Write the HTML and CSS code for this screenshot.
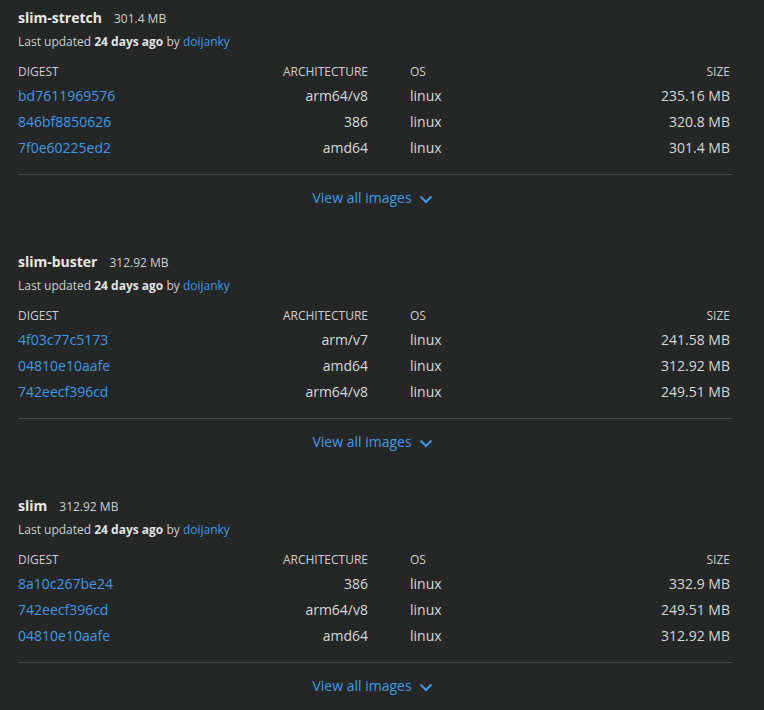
FILE: index.html
```html
<!DOCTYPE html>
<html>
<head>
<meta charset="utf-8">
<link rel="stylesheet" href="styles.css">
</head>
<body>
<div class="page">
  <section class="tag">
    <div class="tag-title"><span class="tag-name">slim-stretch</span><span class="tag-size">301.4 MB</span></div>
    <div class="tag-meta">Last updated <b>24 days ago</b> by <a class="link">doijanky</a></div>
    <div class="table">
      <div class="th">DIGEST</div><div class="th r">ARCHITECTURE</div><div class="th os">OS</div><div class="th r">SIZE</div>
      <a class="td link">bd7611969576</a><div class="td r">arm64/v8</div><div class="td os">linux</div><div class="td r">235.16 MB</div>
      <a class="td link">846bf8850626</a><div class="td r">386</div><div class="td os">linux</div><div class="td r">320.8 MB</div>
      <a class="td link">7f0e60225ed2</a><div class="td r">amd64</div><div class="td os">linux</div><div class="td r">301.4 MB</div>
    </div>
    <div class="divider"></div>
    <div class="more"><a class="more-link">View all images <svg class="chev" width="14" height="9" viewBox="0 0 14 9"><path d="M1.5 1.5 L7 7 L12.5 1.5" fill="none" stroke="currentColor" stroke-width="2"/></svg></a></div>
  </section>
  <section class="tag">
    <div class="tag-title"><span class="tag-name">slim-buster</span><span class="tag-size">312.92 MB</span></div>
    <div class="tag-meta">Last updated <b>24 days ago</b> by <a class="link">doijanky</a></div>
    <div class="table">
      <div class="th">DIGEST</div><div class="th r">ARCHITECTURE</div><div class="th os">OS</div><div class="th r">SIZE</div>
      <a class="td link">4f03c77c5173</a><div class="td r">arm/v7</div><div class="td os">linux</div><div class="td r">241.58 MB</div>
      <a class="td link">04810e10aafe</a><div class="td r">amd64</div><div class="td os">linux</div><div class="td r">312.92 MB</div>
      <a class="td link">742eecf396cd</a><div class="td r">arm64/v8</div><div class="td os">linux</div><div class="td r">249.51 MB</div>
    </div>
    <div class="divider"></div>
    <div class="more"><a class="more-link">View all images <svg class="chev" width="14" height="9" viewBox="0 0 14 9"><path d="M1.5 1.5 L7 7 L12.5 1.5" fill="none" stroke="currentColor" stroke-width="2"/></svg></a></div>
  </section>
  <section class="tag">
    <div class="tag-title"><span class="tag-name">slim</span><span class="tag-size">312.92 MB</span></div>
    <div class="tag-meta">Last updated <b>24 days ago</b> by <a class="link">doijanky</a></div>
    <div class="table">
      <div class="th">DIGEST</div><div class="th r">ARCHITECTURE</div><div class="th os">OS</div><div class="th r">SIZE</div>
      <a class="td link">8a10c267be24</a><div class="td r">386</div><div class="td os">linux</div><div class="td r">332.9 MB</div>
      <a class="td link">742eecf396cd</a><div class="td r">arm64/v8</div><div class="td os">linux</div><div class="td r">249.51 MB</div>
      <a class="td link">04810e10aafe</a><div class="td r">amd64</div><div class="td os">linux</div><div class="td r">312.92 MB</div>
    </div>
    <div class="divider"></div>
    <div class="more"><a class="more-link">View all images <svg class="chev" width="14" height="9" viewBox="0 0 14 9"><path d="M1.5 1.5 L7 7 L12.5 1.5" fill="none" stroke="currentColor" stroke-width="2"/></svg></a></div>
  </section>
</div>
</body>
</html>
```

FILE: styles.css
```css
html, body {
  margin: 0;
  padding: 0;
  background: #252626;
  height: 100%;
}
body {
  font-family: "Open Sans", "Liberation Sans", sans-serif;
  color: #d6d6d6;
  overflow: hidden;
}
.page {
  padding: 8px 32px 0 18px;
}
.tag {
  display: flex;
  flex-direction: column;
  padding-bottom: 44px;
}
.tag-title {
  display: flex;
  align-items: baseline;
  gap: 12px;
  line-height: 20px;
  height: 20px;
}
.tag-name {
  font-size: 14px;
  font-weight: 700;
  color: #e8e8e8;
}
.tag-size {
  font-size: 12px;
  color: #d0d0d0;
}
.tag-meta {
  margin-top: 6px;
  font-size: 12px;
  line-height: 16px;
  color: #d0d0d0;
}
.tag-meta b {
  font-weight: 700;
  color: #e2e2e2;
}
.link {
  color: #3f9ae9;
  text-decoration: none;
}
.table {
  margin-top: 13px;
  display: grid;
  grid-template-columns: 240px 110px 1fr 160px;
  padding-right: 2px;
}
.th {
  font-size: 12px;
  line-height: 16px;
  height: 19px;
  padding-top: 1px;
  color: #cfcfcf;
}
.td {
  font-size: 14px;
  line-height: 26px;
  height: 26px;
  color: #d8d8d8;
}
.td.link {
  color: #3f9ae9;
}
.r {
  text-align: right;
}
.os {
  padding-left: 42px;
}
.divider {
  margin-top: 13px;
  height: 1px;
  background: #4a4b4b;
}
.more {
  margin-top: 13px;
  display: flex;
  justify-content: center;
  line-height: 20px;
  height: 20px;
}
.more-link {
  font-size: 14px;
  color: #3f9ae9;
  display: flex;
  align-items: center;
  gap: 7px;
  margin-left: -5px;
}
.chev {
  display: block;
  margin-top: 2px;
}
```
